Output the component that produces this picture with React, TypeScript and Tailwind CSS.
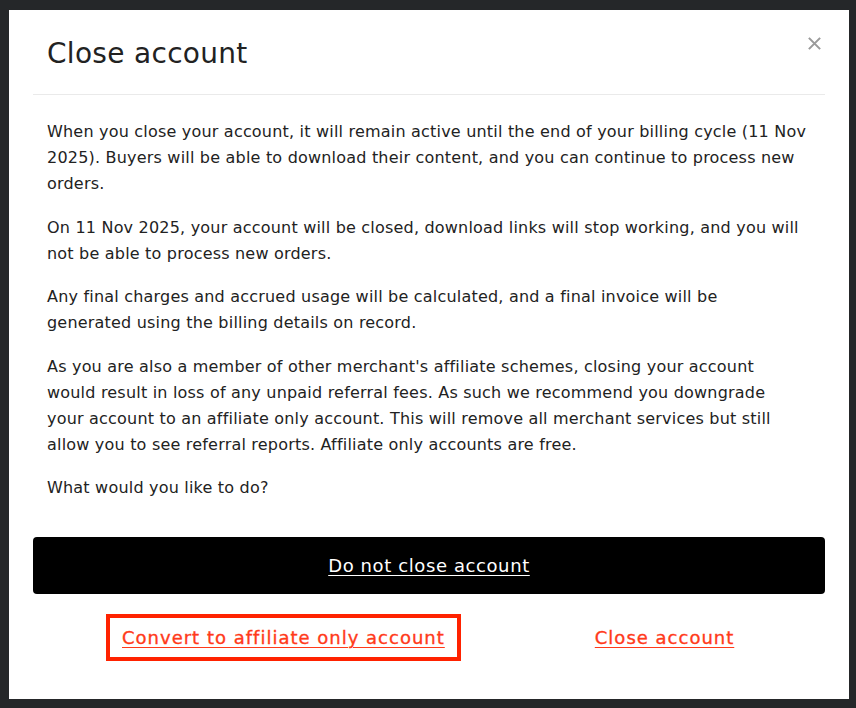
import React from "react";

export default function App() {
  const link =
    "text-[#ff3a1a] text-[18px] underline underline-offset-[3px] decoration-1 tracking-[1px] whitespace-nowrap [-webkit-text-stroke:0.35px_#ff3a1a]";
  return (
    <div className="w-[856px] h-[708px] bg-[#252729] pt-[10px] pl-[9px]" style={{ fontFamily: '"DejaVu Sans", sans-serif' }}>
      <div className="w-[840px] h-[689px] bg-white px-[24px] flex flex-col">
        <div className="relative h-[85px] shrink-0 border-b border-[#eaeaea] pl-[14px] pt-[26px]">
          <h1 className="text-[28px] leading-[36px] text-[#222] font-normal tracking-[0.3px]">Close account</h1>
          <button className="absolute right-[3px] top-[26px]">
            <svg width="15" height="15" viewBox="0 0 16 16">
              <path d="M2 2 L14 14 M14 2 L2 14" stroke="#9a9a9a" strokeWidth="2.2" />
            </svg>
          </button>
        </div>
        <div className="pl-[14px] pt-[24px] text-[16px] leading-[26px] text-[#222] tracking-[0.2px] whitespace-nowrap">
          <p className="mb-[17.5px]">
            When you close your account, it will remain active until the end of your billing cycle (11 Nov
            <br />
            2025). Buyers will be able to download their content, and you can continue to process new
            <br />
            orders.
          </p>
          <p className="mb-[17.5px]">
            On 11 Nov 2025, your account will be closed, download links will stop working, and you will
            <br />
            not be able to process new orders.
          </p>
          <p className="mb-[17.5px]">
            Any final charges and accrued usage will be calculated, and a final invoice will be
            <br />
            generated using the billing details on record.
          </p>
          <p className="mb-[17.5px]">
            As you are also a member of other merchant's affiliate schemes, closing your account
            <br />
            would result in loss of any unpaid referral fees. As such we recommend you downgrade
            <br />
            your account to an affiliate only account. This will remove all merchant services but still
            <br />
            allow you to see referral reports. Affiliate only accounts are free.
          </p>
          <p>What would you like to do?</p>
        </div>
        <div className="mt-[36px]">
          <button className="w-full h-[57px] bg-black rounded-[4px] text-white text-[18px] underline underline-offset-[3px] decoration-1 tracking-[0.6px]">
            Do not close account
          </button>
          <div className="flex items-center mt-[20px]">
            <div className="ml-[73px] border-[4px] border-[#ff2200] h-[47px] pl-[12px] pr-[12px] flex items-center">
              <a className={link}>Convert to affiliate only account</a>
            </div>
            <a className={"ml-[134px] " + link}>Close account</a>
          </div>
        </div>
      </div>
    </div>
  );
}
